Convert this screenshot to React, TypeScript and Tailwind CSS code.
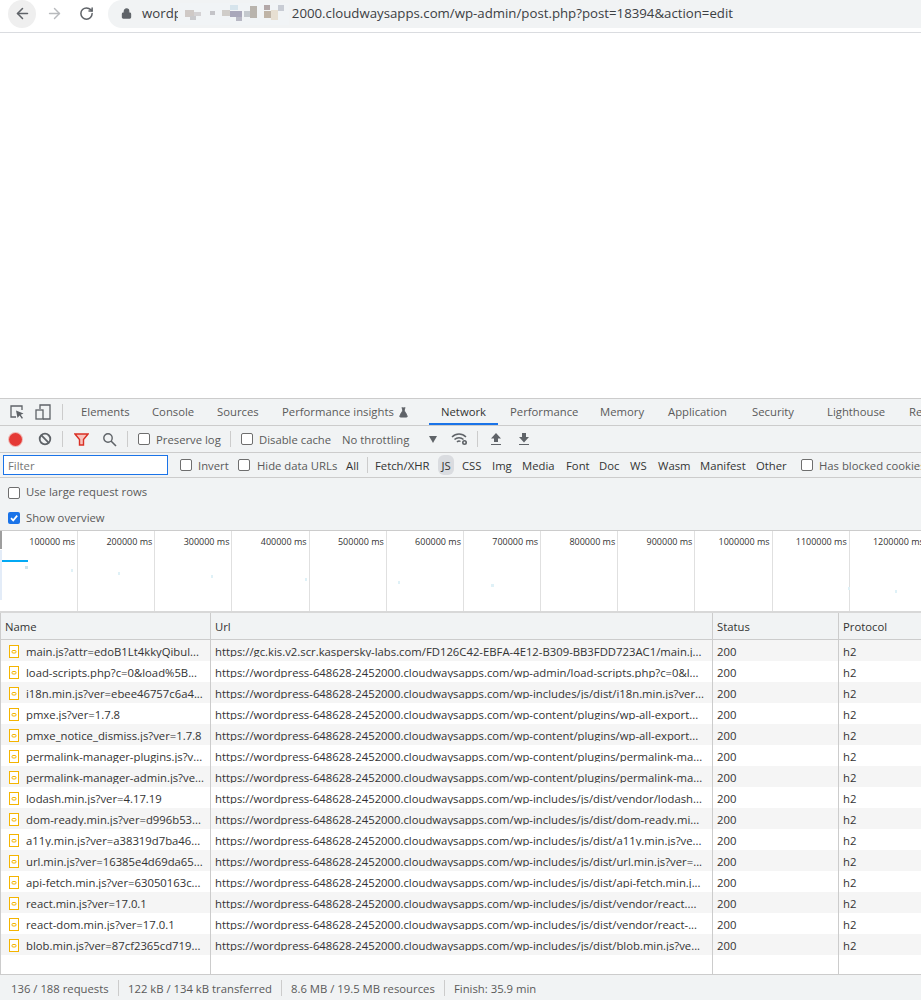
import { ArrowLeft, ArrowRight, RotateCw, Lock, FlaskConical } from 'lucide-react'

const font = { fontFamily: '"Open Sans", "Noto Sans", sans-serif' }

const tabs = [
  { label: 'Elements', w: 'w-[71px]' },
  { label: 'Console', w: 'w-[65px]' },
  { label: 'Sources', w: 'w-[65px]' },
  { label: 'Performance insights', w: 'w-[159px]', flask: true },
  { label: 'Network', w: 'w-[69px]', active: true },
  { label: 'Performance', w: 'w-[90px]' },
  { label: 'Memory', w: 'w-[68px]' },
  { label: 'Application', w: 'w-[84px]' },
  { label: 'Security', w: 'w-[75px]' },
  { label: 'Lighthouse', w: 'w-[82px]' },
  { label: 'Recorder', w: 'w-[60px]' },
]

const types = [
  { label: 'Fetch/XHR', w: 'w-[63px]' },
  { label: 'JS', w: 'w-[16px]', active: true },
  { label: 'CSS', w: 'w-[30px]' },
  { label: 'Img', w: 'w-[30px]' },
  { label: 'Media', w: 'w-[44px]' },
  { label: 'Font', w: 'w-[33px]' },
  { label: 'Doc', w: 'w-[31px]' },
  { label: 'WS', w: 'w-[28px]' },
  { label: 'Wasm', w: 'w-[42px]' },
  { label: 'Manifest', w: 'w-[56px]' },
  { label: 'Other', w: 'w-[45px]' },
]

const marks = [
  '100000 ms', '200000 ms', '300000 ms', '400000 ms', '500000 ms', '600000 ms',
  '700000 ms', '800000 ms', '900000 ms', '1000000 ms', '1100000 ms', '1200000 ms',
]

const base = 'https://wordpress-648628-2452000.cloudwaysapps.com'

const rows = [
  ['main.js?attr=edoB1Lt4kkyQibul...', 'https://gc.kis.v2.scr.kaspersky-labs.com/FD126C42-EBFA-4E12-B309-BB3FDD723AC1/main.j...'],
  ['load-scripts.php?c=0&load%5B...', base + '/wp-admin/load-scripts.php?c=0&l...'],
  ['i18n.min.js?ver=ebee46757c6a4...', base + '/wp-includes/js/dist/i18n.min.js?ver...'],
  ['pmxe.js?ver=1.7.8', base + '/wp-content/plugins/wp-all-export...'],
  ['pmxe_notice_dismiss.js?ver=1.7.8', base + '/wp-content/plugins/wp-all-export...'],
  ['permalink-manager-plugins.js?v...', base + '/wp-content/plugins/permalink-ma...'],
  ['permalink-manager-admin.js?ve...', base + '/wp-content/plugins/permalink-ma...'],
  ['lodash.min.js?ver=4.17.19', base + '/wp-includes/js/dist/vendor/lodash...'],
  ['dom-ready.min.js?ver=d996b53...', base + '/wp-includes/js/dist/dom-ready.mi...'],
  ['a11y.min.js?ver=a38319d7ba46...', base + '/wp-includes/js/dist/a11y.min.js?ve...'],
  ['url.min.js?ver=16385e4d69da65...', base + '/wp-includes/js/dist/url.min.js?ver=...'],
  ['api-fetch.min.js?ver=63050163c...', base + '/wp-includes/js/dist/api-fetch.min.j...'],
  ['react.min.js?ver=17.0.1', base + '/wp-includes/js/dist/vendor/react....'],
  ['react-dom.min.js?ver=17.0.1', base + '/wp-includes/js/dist/vendor/react-...'],
  ['blob.min.js?ver=87cf2365cd719...', base + '/wp-includes/js/dist/blob.min.js?ve...'],
]

// pixelated patch over the hostname
const blurBlocks = [
  'left-[7px] top-[7px] w-[9px] h-[7px] bg-[#cfc9c6]',
  'left-[16px] top-[9px] w-[7px] h-[4px] bg-[#d4d2d4]',
  'left-[12px] top-[13px] w-[6px] h-[4px] bg-[#c9c9cc]',
  'left-[32px] top-[8px] w-[5px] h-[4px] bg-[#c4c4c8]',
  'left-[44px] top-[7px] w-[8px] h-[6px] bg-[#d0cdc9]',
  'left-[52px] top-[2px] w-[8px] h-[5px] bg-[#d6e4ec]',
  'left-[52px] top-[8px] w-[12px] h-[6px] bg-[#a9a7ba]',
  'left-[58px] top-[14px] w-[6px] h-[4px] bg-[#b8b8c4]',
  'left-[66px] top-[8px] w-[6px] h-[6px] bg-[#c4c9ce]',
  'left-[72px] top-[3px] w-[7px] h-[12px] bg-[#b9b4ad]',
  'left-[86px] top-[2px] w-[6px] h-[5px] bg-[#b3a8a8]',
  'left-[86px] top-[8px] w-[7px] h-[7px] bg-[#bfb4a6]',
  'left-[93px] top-[7px] w-[7px] h-[10px] bg-[#e7dfd2]',
  'left-[100px] top-[2px] w-[6px] h-[6px] bg-[#c8ccd4]',
]

function Box({ checked, className = '' }: { checked?: boolean; className?: string }) {
  if (checked) {
    return (
      <span className={`w-[12px] h-[12px] rounded-[2px] bg-[#1a73e8] flex items-center justify-center shrink-0 ${className}`}>
        <svg width="10" height="10" viewBox="0 0 10 10">
          <path d="M2 5.2 L4.2 7.4 L8.2 2.6" stroke="#fff" strokeWidth="1.7" fill="none" />
        </svg>
      </span>
    )
  }
  return <span className={`w-[12px] h-[12px] rounded-[2px] border border-[#6e6e6e] bg-white shrink-0 ${className}`} />
}

function Sep({ className = '' }: { className?: string }) {
  return <span className={`w-px h-[16px] bg-[#ccc] shrink-0 ${className}`} />
}

function FileIcon() {
  return (
    <svg width="10" height="13" viewBox="0 0 10 13" className="shrink-0">
      <rect x="0.5" y="0.5" width="9" height="12" fill="#fff" stroke="#f4b400" />
      <rect x="3" y="5.5" width="4" height="2.5" rx="1" fill="none" stroke="#f4b400" />
    </svg>
  )
}

export default function App() {
  return (
    <div style={font} className="w-[921px] h-[1000px] overflow-hidden bg-white flex flex-col text-[11.3px] leading-none text-[#333]">
      {/* browser bar */}
      <div className="h-[33px] shrink-0 border-b border-[#dadce0] flex items-center pl-[8px] pb-[5px]">
        <span className="w-[28px] h-[28px] rounded-full bg-[#efefef] flex items-center justify-center">
          <ArrowLeft size={17} color="#5f6368" strokeWidth={2.2} />
        </span>
        <ArrowRight size={17} color="#b8babd" strokeWidth={2} className="ml-[10px]" />
        <RotateCw size={15} color="#5f6368" strokeWidth={2.4} className="ml-[16px]" />
        <div className="relative ml-[14px] w-[813px] h-[28px] rounded-l-full bg-[#f1f3f4] flex items-center pl-[13px] text-[13.24px] text-[#3c4043]">
          <Lock size={11} color="#5f6368" fill="#5f6368" strokeWidth={2.4} className="mr-[10px]" />
          <span>wordp</span>
          <span className="w-[110px] shrink-0" />
          <span>2000.cloudwaysapps.com/wp-admin/post.php?post=18394&amp;action=edit</span>
          <div className="absolute left-[70px] top-[3px] w-[111px] h-[22px] bg-[#f1f4f6]">
            {blurBlocks.map((b) => (
              <span key={b} className={`absolute ${b}`} />
            ))}
          </div>
        </div>
      </div>

      <div className="h-[365px] shrink-0" />

      {/* devtools */}
      <div className="flex-1 min-h-0 bg-[#f1f3f4] border-t border-[#ccc] flex flex-col text-[#5a5a5a]">
        <div className="h-[27px] shrink-0 border-b border-[#ccc] flex items-center overflow-hidden">
          <svg width="16" height="16" viewBox="0 0 16 16" className="ml-[9px] shrink-0">
            <path d="M7 13 H2 V2 H13 V6" stroke="#5f6368" strokeWidth="1.3" fill="none" />
            <path d="M7 6.5 L14.5 9.5 L11.7 10.8 L14 14 L12.8 14.8 L10.6 11.6 L8.5 14 Z" fill="#5f6368" />
          </svg>
          <svg width="16" height="16" viewBox="0 0 16 16" className="ml-[10px] shrink-0">
            <path d="M5 5 V1 H15 V15 H8" stroke="#5f6368" strokeWidth="1.3" fill="none" />
            <rect x="1" y="6" width="7" height="9" stroke="#5f6368" strokeWidth="1.3" fill="none" />
          </svg>
          <Sep className="ml-[11px] mr-[12px]" />
          {tabs.map((t) => (
            <div
              key={t.label}
              className={`${t.w} h-full shrink-0 flex items-center pl-[6px] whitespace-nowrap relative ${t.active ? 'text-[#333]' : ''}`}
            >
              {t.label}
              {t.flask && <FlaskConical size={11} fill="#5f6368" color="#5f6368" className="ml-[4px]" />}
              {t.active && <span className="absolute left-[-6px] right-[6px] bottom-0 h-[2px] bg-[#1a73e8]" />}
            </div>
          ))}
        </div>

        <div className="h-[27px] shrink-0 border-b border-[#ccc] flex items-center whitespace-nowrap">
          <span className="ml-[9px] w-[13px] h-[13px] rounded-full bg-[#e53935] shadow-[0_0_0_1px_#f0b8b4] shrink-0" />
          <svg width="14" height="14" viewBox="0 0 14 14" className="ml-[16px] shrink-0">
            <circle cx="7" cy="7" r="5.3" stroke="#5f6368" strokeWidth="1.8" fill="none" />
            <path d="M3.2 3.2 L10.8 10.8" stroke="#5f6368" strokeWidth="1.8" />
          </svg>
          <Sep className="ml-[10px]" />
          <svg width="15" height="13" viewBox="0 0 15 13" className="ml-[11px] shrink-0">
            <path d="M1 1 H14 L9.5 6.5 V12 H5.5 V6.5 Z" fill="#f9c2bc" stroke="#d93025" strokeWidth="1.4" />
          </svg>
          <svg width="15" height="15" viewBox="0 0 15 15" className="ml-[13px] shrink-0">
            <circle cx="6" cy="6" r="4.2" stroke="#5f6368" strokeWidth="1.4" fill="none" />
            <path d="M9 9 L14 14" stroke="#5f6368" strokeWidth="1.6" />
          </svg>
          <Sep className="ml-[10px]" />
          <Box className="ml-[10px]" />
          <span className="ml-[6px] w-[74px] pt-[2px]">Preserve log</span>
          <Sep />
          <Box className="ml-[10px]" />
          <span className="ml-[6px] w-[83px] pt-[2px]">Disable cache</span>
          <span className="w-[87px] pt-[2px]">No throttling</span>
          <span className="w-0 h-0 shrink-0 border-l-[4px] border-r-[4px] border-t-[7px] border-l-transparent border-r-transparent border-t-[#5f6368]" />
          <svg width="18" height="14" viewBox="0 0 18 14" className="ml-[14px] shrink-0">
            <path d="M1 5 C5 1 11 1 15 5 M3.5 7.5 C6 5 10 5 12.5 7.5 M6 10 C7 9 8.5 8.8 9.5 9.5" stroke="#5f6368" strokeWidth="1.5" fill="none" />
            <circle cx="13.5" cy="10.5" r="2.5" fill="#5f6368" />
            <circle cx="13.5" cy="10.5" r="0.9" fill="#f1f3f4" />
          </svg>
          <Sep className="ml-[8px]" />
          <svg width="12" height="14" viewBox="0 0 12 14" className="ml-[12px] shrink-0">
            <path d="M6 1 L11 6.5 H8 V10 H4 V6.5 H1 Z M1 12 H11 V13 H1 Z" fill="#5f6368" />
          </svg>
          <svg width="12" height="14" viewBox="0 0 12 14" className="ml-[16px] shrink-0">
            <path d="M4 1 H8 V5 H11 L6 10.5 L1 5 H4 Z M1 12 H11 V13 H1 Z" fill="#5f6368" />
          </svg>
        </div>

        <div className="h-[25px] shrink-0 border-b border-[#ccc] flex items-center whitespace-nowrap overflow-hidden text-[#333]">
          <div className="ml-[3px] w-[165px] h-[20px] shrink-0 bg-white border border-[#1a73e8] flex items-center pl-[4px] pt-[2px] text-[#757575]">
            Filter
          </div>
          <Box className="ml-[12px]" />
          <span className="ml-[6px] w-[40px] shrink-0 pt-[2px] text-[#5a5a5a]">Invert</span>
          <Box />
          <span className="ml-[7px] w-[89px] shrink-0 pt-[2px] text-[#5a5a5a]">Hide data URLs</span>
          <span className="w-[21px] shrink-0 pt-[2px]">All</span>
          <Sep className="mr-[7px]" />
          {types.map((t) => (
            <span key={t.label} className={`${t.w} shrink-0 h-[20px] flex items-center pt-[2px] ${t.active ? 'bg-[#dadce0] rounded-[6px] justify-center mr-[8px]' : ''}`}>
              {t.label}
            </span>
          ))}
          <Box />
          <span className="ml-[6px] pt-[2px] text-[#5a5a5a]">Has blocked cookies</span>
        </div>

        <div className="h-[53px] shrink-0 border-b border-[#ccc] flex flex-col text-[#5a5a5a]">
          <div className="h-[27px] flex items-center pl-[8px] pt-[2px]">
            <Box />
            <span className="ml-[6px] pb-[2px]">Use large request rows</span>
          </div>
          <div className="h-[25px] flex items-center pl-[8px] pt-[1px]">
            <Box checked />
            <span className="ml-[6px]">Show overview</span>
          </div>
        </div>

        {/* overview */}
        <div className="relative h-[82px] shrink-0 bg-white flex pl-[1px] overflow-hidden border-b-[2px] border-[#d8d8d8]">
          {marks.map((m) => (
            <div key={m} className="w-[77.17px] shrink-0 border-r border-[#e0e0e0] text-right pr-[2px] pt-[6px] text-[9px] text-[#333] whitespace-nowrap">
              {m}
            </div>
          ))}
          <span className="absolute left-0 top-0 w-[2px] h-[18px] bg-[#9e9e9e]" />
          <span className="absolute left-0 top-[19px] w-[2px] h-[50px] bg-[#e3ecf8]" />
          <span className="absolute left-[2px] top-[29px] w-[26px] h-[2px] bg-[#03a9f4]" />
          <span className="absolute left-[25px] top-[35px] w-[3px] h-[3px] bg-[#cfe3ea]" />
          <span className="absolute left-[71px] top-[38px] w-[2px] h-[3px] bg-[#dff1f7]" />
          <span className="absolute left-[118px] top-[41px] w-[2px] h-[3px] bg-[#dff1f7]" />
          <span className="absolute left-[211px] top-[44px] w-[2px] h-[3px] bg-[#dff1f7]" />
          <span className="absolute left-[305px] top-[47px] w-[2px] h-[3px] bg-[#dff1f7]" />
          <span className="absolute left-[398px] top-[50px] w-[2px] h-[3px] bg-[#dff1f7]" />
          <span className="absolute left-[491px] top-[53px] w-[3px] h-[3px] bg-[#dff1f7]" />
          <span className="absolute left-[848px] top-[56px] w-[2px] h-[3px] bg-[#dff1f7]" />
          <span className="absolute left-[895px] top-[59px] w-[2px] h-[3px] bg-[#dff1f7]" />
        </div>

        {/* table */}
        <div className="flex-1 min-h-0 bg-white border-l border-[#ccc] flex flex-col relative text-[#333]">
          <div className="h-[27px] shrink-0 bg-[#f1f3f4] border-b border-[#ccc] flex items-center pt-[2px]">
            <div className="w-[210px] pl-[4px]">Name</div>
            <div className="w-[502px] pl-[4px]">Url</div>
            <div className="w-[126px] pl-[4px]">Status</div>
            <div className="pl-[4px]">Protocol</div>
          </div>
          {rows.map((r, i) => (
            <div key={r[0]} className={`h-[21px] shrink-0 flex items-center pt-[2px] whitespace-nowrap ${i % 2 === 0 ? 'bg-[#f5f5f5]' : 'bg-white'}`}>
              <div className="w-[210px] pl-[8px] flex items-center gap-[7px] overflow-hidden">
                <FileIcon />
                <span>{r[0]}</span>
              </div>
              <div className="w-[502px] pl-[4px] overflow-hidden">{r[1]}</div>
              <div className="w-[126px] pl-[4px]">200</div>
              <div className="pl-[4px]">h2</div>
            </div>
          ))}
          <span className="absolute left-[209px] top-0 bottom-0 w-px bg-[#ccc]" />
          <span className="absolute left-[711px] top-0 bottom-0 w-px bg-[#ccc]" />
          <span className="absolute left-[837px] top-0 bottom-0 w-px bg-[#ccc]" />
        </div>

        <div className="h-[26px] shrink-0 border-t border-[#ccc] flex items-center text-[#5a5a5a] whitespace-nowrap">
          <span className="w-[118px] pl-[11px] pt-[3px]">136 / 188 requests</span>
          <Sep />
          <span className="w-[162px] pl-[9px] pt-[3px]">122 kB / 134 kB transferred</span>
          <Sep />
          <span className="w-[162px] pl-[9px] pt-[3px]">8.6 MB / 19.5 MB resources</span>
          <Sep />
          <span className="pl-[9px] pt-[3px]">Finish: 35.9 min</span>
        </div>
      </div>
    </div>
  )
}
